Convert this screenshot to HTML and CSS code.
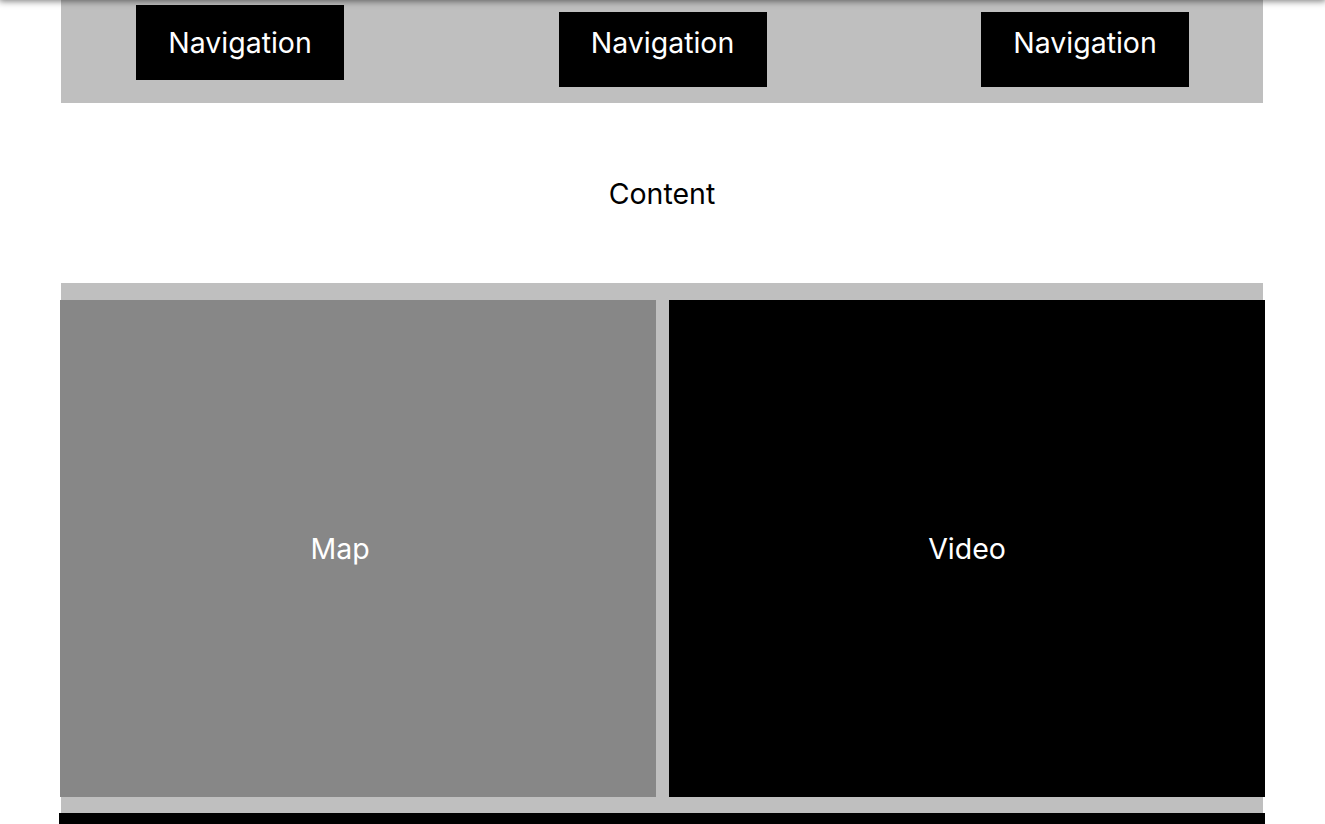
FILE: index.html
```html
<!DOCTYPE html>
<html lang="en">
<head>
<meta charset="utf-8">
<title>Layout</title>
<link rel="stylesheet" href="styles.css">
</head>
<body>
<div class="topbar-shadow"></div>
<div class="page">
  <nav class="nav">
    <a class="nav-item is-raised">Navigation</a>
    <a class="nav-item">Navigation</a>
    <a class="nav-item">Navigation</a>
  </nav>
  <section class="content">Content</section>
  <section class="media">
    <div class="media-row">
      <div class="tile tile-map">Map</div>
      <div class="tile tile-video">Video</div>
    </div>
  </section>
  <footer class="footer"></footer>
</div>
</body>
</html>
```
FILE: styles.css
```css
html, body {
  margin: 0;
  padding: 0;
  background: #ffffff;
  font-family: Inter, "Noto Sans", sans-serif;
}

.topbar-shadow {
  position: fixed;
  top: -10px;
  left: 0;
  right: 0;
  height: 10px;
  box-shadow: 0 0 7px 1px rgba(0, 0, 0, 0.55);
  z-index: 10;
}

.page {
  width: 1202px;
  margin: 0 0 0 61px;
}

.nav {
  background: #bfbfbf;
  height: 103px;
  box-sizing: border-box;
  padding: 12px 74px 0 75px;
  display: flex;
  justify-content: space-between;
  align-items: flex-start;
}

.nav-item {
  width: 208px;
  height: 75px;
  box-sizing: border-box;
  padding-top: 13px;
  background: #000000;
  color: #ffffff;
  font-size: 28.5px;
  text-align: center;
}

.nav-item.is-raised {
  margin-top: -7px;
  padding-top: 20px;
}

.content {
  height: 180px;
  display: flex;
  align-items: center;
  justify-content: center;
  font-size: 28.5px;
  color: #000000;
}

.media {
  background: #bfbfbf;
  padding: 17px 0 16px;
}

.media-row {
  margin: 0 -2px 0 -1px;
  display: grid;
  grid-template-columns: 596px 596px;
  column-gap: 13px;
  height: 497px;
}

.tile {
  display: flex;
  align-items: center;
  justify-content: center;
  color: #ffffff;
  font-size: 28.5px;
}

.tile-map {
  background: #878787;
  padding-right: 36px;
}

.tile-video {
  background: #000000;
}

.footer {
  margin: 0 -2px;
  height: 40px;
  background: #000000;
}
```
